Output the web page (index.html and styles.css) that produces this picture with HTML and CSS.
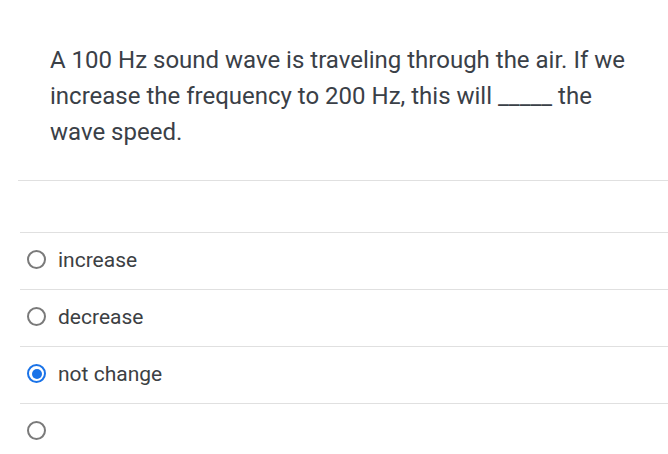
FILE: index.html
```html
<!DOCTYPE html>
<html>
<head>
<meta charset="utf-8">
<link rel="stylesheet" href="styles.css">
</head>
<body>
<div class="page">
  <div class="question">A 100 Hz sound wave is traveling through the air. If we increase the frequency to 200 Hz, this will _____ the wave speed.</div>
  <div class="sep"></div>
  <ul class="options">
    <li class="option"><span class="radio"></span><span class="label">increase</span></li>
    <li class="option"><span class="radio"></span><span class="label">decrease</span></li>
    <li class="option"><span class="radio checked"></span><span class="label">not change</span></li>
    <li class="option"><span class="radio"></span><span class="label"></span></li>
  </ul>
</div>
</body>
</html>
```
FILE: styles.css
```css
html, body {
  margin: 0;
  padding: 0;
  background: #ffffff;
}
body {
  font-family: Roboto, "Liberation Sans", sans-serif;
  color: #3c4043;
  width: 668px;
  height: 454px;
  overflow: hidden;
}
.page {
  padding-top: 42px;
}
.question {
  padding: 0 40px 0 50px;
  font-size: 24px;
  line-height: 36px;
  color: #3a4047;
}
.sep {
  margin: 30px 0 0 18px;
  height: 1px;
  background: #e0e0e0;
}
.options {
  list-style: none;
  margin: 51px 0 0 20px;
  padding: 0;
}
.option {
  display: flex;
  align-items: center;
  gap: 12px;
  height: 53px;
  border-top: 1px solid #e0e0e0;
  padding: 0 0 3px 7px;
  box-sizing: content-box;
  font-size: 21px;
}
.radio {
  width: 15px;
  height: 15px;
  border: 2px solid #7a7a7a;
  border-radius: 50%;
  box-sizing: content-box;
  flex: none;
  position: relative;
}
.radio.checked {
  border-color: #1a73e8;
}
.radio.checked::after {
  content: "";
  position: absolute;
  left: 2.5px;
  top: 2.5px;
  width: 10px;
  height: 10px;
  border-radius: 50%;
  background: #1a73e8;
}
.label {
  color: #3c4043;
}
```
